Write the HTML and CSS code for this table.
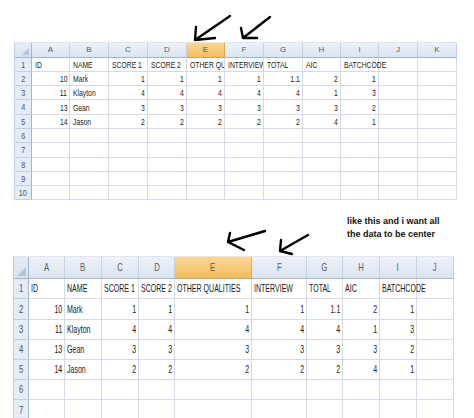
FILE: index.html
```html
<!DOCTYPE html>
<html>
<head>
<meta charset="utf-8">
<link rel="stylesheet" href="styles.css">
</head>
<body>
<div class="sheet top">
  <div class="corner"></div><div class="h">A</div><div class="h">B</div><div class="h">C</div><div class="h">D</div><div class="h sel">E</div><div class="h">F</div><div class="h">G</div><div class="h">H</div><div class="h">I</div><div class="h">J</div><div class="h">K</div>
  <div class="r"><span class="t">1</span></div><div class="c"><span class="t">ID</span></div><div class="c"><span class="t">NAME</span></div><div class="c"><span class="t">SCORE 1</span></div><div class="c"><span class="t">SCORE 2</span></div><div class="c"><span class="t">OTHER QUALITIES</span></div><div class="c"><span class="t">INTERVIEW</span></div><div class="c"><span class="t">TOTAL</span></div><div class="c"><span class="t">AIC</span></div><div class="c ov"><span class="t">BATCHCODE</span></div><div class="c"></div><div class="c"></div>
  <div class="r"><span class="t">2</span></div><div class="c n"><span class="t">10</span></div><div class="c"><span class="t">Mark</span></div><div class="c n"><span class="t">1</span></div><div class="c n"><span class="t">1</span></div><div class="c n"><span class="t">1</span></div><div class="c n"><span class="t">1</span></div><div class="c n"><span class="t">1.1</span></div><div class="c n"><span class="t">2</span></div><div class="c n"><span class="t">1</span></div><div class="c"></div><div class="c"></div>
  <div class="r"><span class="t">3</span></div><div class="c n"><span class="t">11</span></div><div class="c"><span class="t">Klayton</span></div><div class="c n"><span class="t">4</span></div><div class="c n"><span class="t">4</span></div><div class="c n"><span class="t">4</span></div><div class="c n"><span class="t">4</span></div><div class="c n"><span class="t">4</span></div><div class="c n"><span class="t">1</span></div><div class="c n"><span class="t">3</span></div><div class="c"></div><div class="c"></div>
  <div class="r"><span class="t">4</span></div><div class="c n"><span class="t">13</span></div><div class="c"><span class="t">Gean</span></div><div class="c n"><span class="t">3</span></div><div class="c n"><span class="t">3</span></div><div class="c n"><span class="t">3</span></div><div class="c n"><span class="t">3</span></div><div class="c n"><span class="t">3</span></div><div class="c n"><span class="t">3</span></div><div class="c n"><span class="t">2</span></div><div class="c"></div><div class="c"></div>
  <div class="r"><span class="t">5</span></div><div class="c n"><span class="t">14</span></div><div class="c"><span class="t">Jason</span></div><div class="c n"><span class="t">2</span></div><div class="c n"><span class="t">2</span></div><div class="c n"><span class="t">2</span></div><div class="c n"><span class="t">2</span></div><div class="c n"><span class="t">2</span></div><div class="c n"><span class="t">4</span></div><div class="c n"><span class="t">1</span></div><div class="c"></div><div class="c"></div>
  <div class="r"><span class="t">6</span></div><div class="c"></div><div class="c"></div><div class="c"></div><div class="c"></div><div class="c"></div><div class="c"></div><div class="c"></div><div class="c"></div><div class="c"></div><div class="c"></div><div class="c"></div>
  <div class="r"><span class="t">7</span></div><div class="c"></div><div class="c"></div><div class="c"></div><div class="c"></div><div class="c"></div><div class="c"></div><div class="c"></div><div class="c"></div><div class="c"></div><div class="c"></div><div class="c"></div>
  <div class="r"><span class="t">8</span></div><div class="c"></div><div class="c"></div><div class="c"></div><div class="c"></div><div class="c"></div><div class="c"></div><div class="c"></div><div class="c"></div><div class="c"></div><div class="c"></div><div class="c"></div>
  <div class="r"><span class="t">9</span></div><div class="c"></div><div class="c"></div><div class="c"></div><div class="c"></div><div class="c"></div><div class="c"></div><div class="c"></div><div class="c"></div><div class="c"></div><div class="c"></div><div class="c"></div>
  <div class="r"><span class="t">10</span></div><div class="c"></div><div class="c"></div><div class="c"></div><div class="c"></div><div class="c"></div><div class="c"></div><div class="c"></div><div class="c"></div><div class="c"></div><div class="c"></div><div class="c"></div>
</div>

<p class="note">like this and i want all<br>the data to be center</p>

<div class="sheet bottom">
  <div class="corner"></div><div class="h"><span class="t">A</span></div><div class="h"><span class="t">B</span></div><div class="h"><span class="t">C</span></div><div class="h"><span class="t">D</span></div><div class="h sel"><span class="t">E</span></div><div class="h"><span class="t">F</span></div><div class="h"><span class="t">G</span></div><div class="h"><span class="t">H</span></div><div class="h"><span class="t">I</span></div><div class="h"><span class="t">J</span></div>
  <div class="r"><span class="t">1</span></div><div class="c"><span class="t">ID</span></div><div class="c"><span class="t">NAME</span></div><div class="c"><span class="t">SCORE 1</span></div><div class="c"><span class="t">SCORE 2</span></div><div class="c"><span class="t">OTHER QUALITIES</span></div><div class="c"><span class="t">INTERVIEW</span></div><div class="c"><span class="t">TOTAL</span></div><div class="c"><span class="t">AIC</span></div><div class="c ov"><span class="t">BATCHCODE</span></div><div class="c"></div>
  <div class="r"><span class="t">2</span></div><div class="c n"><span class="t">10</span></div><div class="c"><span class="t">Mark</span></div><div class="c n"><span class="t">1</span></div><div class="c n"><span class="t">1</span></div><div class="c n"><span class="t">1</span></div><div class="c n"><span class="t">1</span></div><div class="c n"><span class="t">1.1</span></div><div class="c n"><span class="t">2</span></div><div class="c n"><span class="t">1</span></div><div class="c"></div>
  <div class="r"><span class="t">3</span></div><div class="c n"><span class="t">11</span></div><div class="c"><span class="t">Klayton</span></div><div class="c n"><span class="t">4</span></div><div class="c n"><span class="t">4</span></div><div class="c n"><span class="t">4</span></div><div class="c n"><span class="t">4</span></div><div class="c n"><span class="t">4</span></div><div class="c n"><span class="t">1</span></div><div class="c n"><span class="t">3</span></div><div class="c"></div>
  <div class="r"><span class="t">4</span></div><div class="c n"><span class="t">13</span></div><div class="c"><span class="t">Gean</span></div><div class="c n"><span class="t">3</span></div><div class="c n"><span class="t">3</span></div><div class="c n"><span class="t">3</span></div><div class="c n"><span class="t">3</span></div><div class="c n"><span class="t">3</span></div><div class="c n"><span class="t">3</span></div><div class="c n"><span class="t">2</span></div><div class="c"></div>
  <div class="r"><span class="t">5</span></div><div class="c n"><span class="t">14</span></div><div class="c"><span class="t">Jason</span></div><div class="c n"><span class="t">2</span></div><div class="c n"><span class="t">2</span></div><div class="c n"><span class="t">2</span></div><div class="c n"><span class="t">2</span></div><div class="c n"><span class="t">2</span></div><div class="c n"><span class="t">4</span></div><div class="c n"><span class="t">1</span></div><div class="c"></div>
  <div class="r"><span class="t">6</span></div><div class="c"></div><div class="c"></div><div class="c"></div><div class="c"></div><div class="c"></div><div class="c"></div><div class="c"></div><div class="c"></div><div class="c"></div><div class="c"></div>
  <div class="r"><span class="t">7</span></div><div class="c"></div><div class="c"></div><div class="c"></div><div class="c"></div><div class="c"></div><div class="c"></div><div class="c"></div><div class="c"></div><div class="c"></div><div class="c"></div>
</div>

<svg class="arrows" width="474" height="418" viewBox="0 0 474 418">
  <g fill="none" stroke="#000" stroke-width="2.4" stroke-linecap="round" stroke-linejoin="round">
    <path d="M230 16 L195 40 M196 27 L195 40 L215 38"/>
    <path d="M270 17 L243 38 M241 28 L243 38 L257 38"/>
    <path d="M265 231 L228 242 M230 233 L228 242 L244 250"/>
    <path d="M308 235 L280 251 M281 240 L280 251 L292 254"/>
  </g>
</svg>
</body>
</html>
```

FILE: styles.css
```css
html, body {
  margin: 0;
  padding: 0;
  background: #fff;
}
body {
  position: relative;
  width: 474px;
  height: 418px;
  overflow: hidden;
  font-family: "Liberation Sans", Arial, sans-serif;
  color: #1a1a1a;
}

.sheet {
  display: grid;
  background: #fff;
}
.sheet > div {
  box-sizing: border-box;
  display: flex;
  align-items: flex-end;
  overflow: hidden;
  white-space: nowrap;
  border-right: 1px solid #d4dbe7;
  border-bottom: 1px solid #d4dbe7;
}
.sheet > .ov { overflow: visible; position: relative; z-index: 1; }

.t {
  display: inline-block;
  flex-shrink: 0;
  transform-origin: left bottom;
}
.sheet .n { justify-content: flex-end; }
.sheet .n .t { transform-origin: right bottom; }

.sheet .h {
  justify-content: center;
  align-items: center;
  background: linear-gradient(#eef2f8, #dbe4f0);
  border-right: 1px solid #c3d0e2;
  border-bottom: 1px solid #9eb6ce;
  color: #555d68;
}
.sheet .h .t { transform-origin: center center; }
.sheet .h.sel {
  background: linear-gradient(#f9d79a, #f4bd5e);
  border-right-color: #e0a850;
  border-bottom-color: #d9a04a;
  color: #6b5a3a;
}
.sheet .r {
  justify-content: center;
  align-items: center;
  background: #e4ecf7;
  border-right: 1px solid #9eb6ce;
  border-bottom: 1px solid #c3d0e2;
  color: #4b5563;
}
.sheet .r .t { transform-origin: center center; }
.sheet .corner {
  position: relative;
  background: linear-gradient(#e6ecf5, #d8e2ee);
  border-right: 1px solid #9eb6ce;
  border-bottom: 1px solid #9eb6ce;
}
.sheet .corner::after {
  content: "";
  position: absolute;
  right: 2px;
  bottom: 2px;
  width: 0;
  height: 0;
  border-left: 9px solid transparent;
  border-bottom: 9px solid #b4c6dc;
}

/* top sheet */
.top {
  margin: 42px 0 0 14px;
  width: 442px;
  grid-template-columns: 17px 38px 39px 39px 39px 38px 39px 39px 38px 38px 39px 39px;
  grid-template-rows: 15px 14px 14px 14px 15px 14px 14px 15px 14px 14px 14px;
  border-left: 1px solid #c3d0e2;
  border-top: 1px solid #dfe6ef;
  font-size: 8.5px;
  line-height: 10px;
}
.top > .c { padding: 0 2px 1px 3px; }
.top > .c.n { padding: 0 2px 1px 2px; }
.top .t { transform: scaleX(0.8); }
.top .h { font-size: 8px; }
.top .h .t, .top .r .t { transform: scaleX(0.85); }
.top .corner::after { border-left-width: 7px; border-bottom-width: 7px; }

/* note */
.note {
  margin: 15px 0 0 347px;
  font-family: "Liberation Sans", Arial, sans-serif;
  font-weight: bold;
  font-size: 9px;
  line-height: 13px;
  color: #111;
}

/* bottom sheet */
.bottom {
  margin: 15px 0 0 13px;
  width: 440px;
  grid-template-columns: 15px 36px 37px 37px 36px 77px 55px 36px 37px 37px 37px;
  grid-template-rows: 22px 20px 21px 20px 20px 20px 20px 21px;
  border-left: 1px solid #c3d0e2;
  border-top: 1px solid #dfe6ef;
  font-size: 11px;
  line-height: 13px;
}
.bottom > .c { padding: 0 2px 3px 2px; }
.bottom > .c.n { padding: 0 2px 3px 2px; }
.bottom .t { transform: scaleX(0.64); }
.bottom .h .t, .bottom .r .t { transform: scaleX(0.7); }

.arrows {
  position: absolute;
  left: 0;
  top: 0;
  pointer-events: none;
}
```
